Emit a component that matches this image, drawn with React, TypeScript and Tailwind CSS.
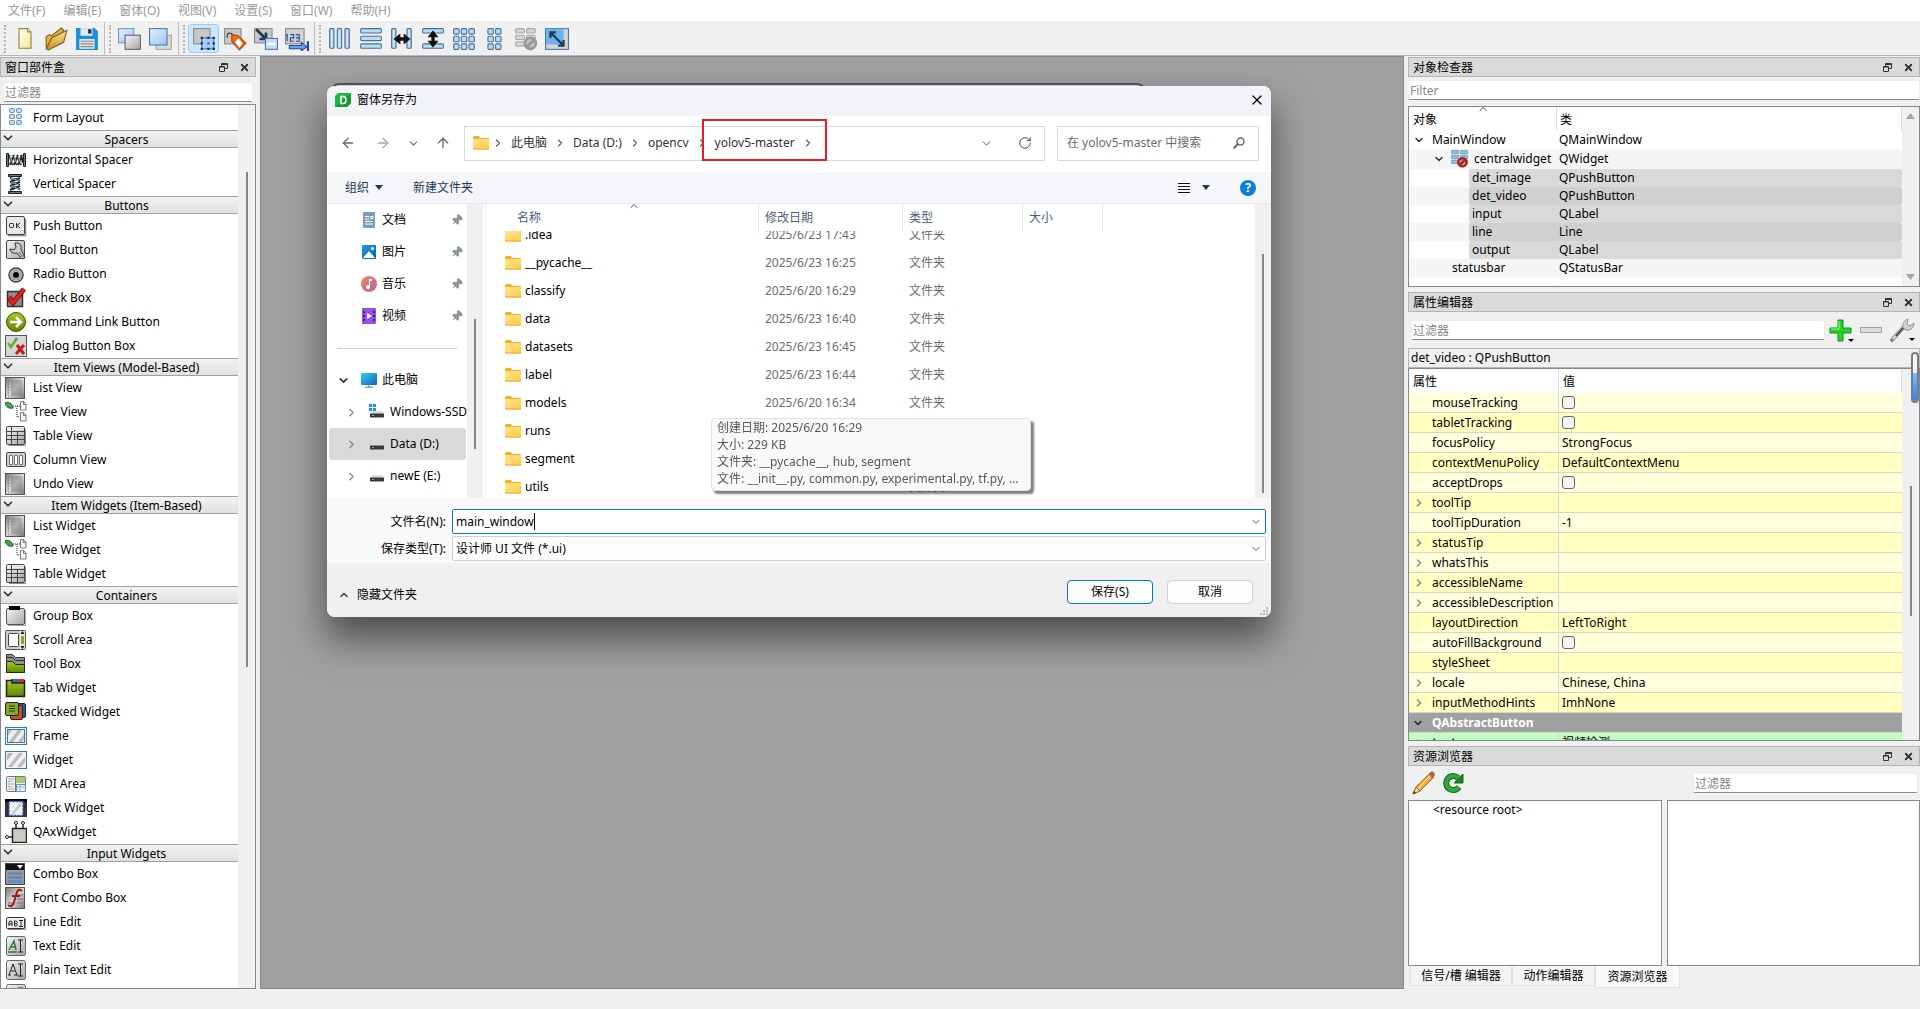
import React, {useEffect, useRef} from 'react';
import {
  ArrowLeft,
  ArrowRight,
  ArrowUp,
  ChevronDown,
  ChevronRight,
  ChevronUp,
  Pin,
  RotateCw,
  Search,
  X,
} from 'lucide-react';

const menus = ['文件(F)', '编辑(E)', '窗体(O)', '视图(V)', '设置(S)', '窗口(W)', '帮助(H)'];

// shared gradients, referenced by id from the icons below
function IconDefs() {
  return (
    <svg className="absolute h-0 w-0" aria-hidden="true">
      <defs>
        <linearGradient id="grey" x1="0" y1="0" x2="1" y2="1">
          <stop offset="0" stopColor="#f4f4f4" />
          <stop offset="1" stopColor="#a8a8a8" />
        </linearGradient>
        <linearGradient id="dark" x1="0" y1="0" x2="1" y2="1">
          <stop offset="0" stopColor="#777" />
          <stop offset="0.5" stopColor="#d8d8d8" />
          <stop offset="1" stopColor="#777" />
        </linearGradient>
        <linearGradient id="blue" x1="0" y1="0" x2="1" y2="1">
          <stop offset="0" stopColor="#e4f0ff" />
          <stop offset="1" stopColor="#9cc4f4" />
        </linearGradient>
        <linearGradient id="bar" x1="0" y1="0" x2="1" y2="0">
          <stop offset="0" stopColor="#8cc0e8" />
          <stop offset="0.5" stopColor="#d4eefc" />
          <stop offset="1" stopColor="#8cc0e8" />
        </linearGradient>
        <linearGradient id="folder" x1="0" y1="0" x2="1" y2="1">
          <stop offset="0" stopColor="#ffe69b" />
          <stop offset="1" stopColor="#ffc93d" />
        </linearGradient>
        <linearGradient id="paper" x1="0" y1="0" x2="1" y2="1">
          <stop offset="0" stopColor="#fff" />
          <stop offset="1" stopColor="#f4e88a" />
        </linearGradient>
        <linearGradient id="gold" x1="0" y1="0" x2="0" y2="1">
          <stop offset="0" stopColor="#fbe596" />
          <stop offset="1" stopColor="#c88f1c" />
        </linearGradient>
        <linearGradient id="green" x1="0" y1="0" x2="0" y2="1">
          <stop offset="0" stopColor="#a4cc1c" />
          <stop offset="1" stopColor="#5e8408" />
        </linearGradient>
        <linearGradient id="screen" x1="0" y1="0" x2="1" y2="1">
          <stop offset="0" stopColor="#35d0e8" />
          <stop offset="1" stopColor="#0b64b8" />
        </linearGradient>
        <linearGradient id="music" x1="0" y1="0" x2="1" y2="1">
          <stop offset="0" stopColor="#f08a50" />
          <stop offset="1" stopColor="#b463b4" />
        </linearGradient>
        <linearGradient id="picture" x1="0" y1="0" x2="1" y2="1">
          <stop offset="0" stopColor="#1b9de8" />
          <stop offset="1" stopColor="#0661b8" />
        </linearGradient>
      </defs>
    </svg>
  );
}

function Svg({size = 22, children}: {size?: number; children: React.ReactNode}) {
  return (
    <svg width={size} height={size} viewBox="0 0 22 22" fill="none" className="shrink-0" aria-hidden="true">
      {children}
    </svg>
  );
}

function Grid({cols, rows, x, y, w, h, gap, fill, stroke}: {
  cols: number; rows: number; x: number; y: number; w: number; h: number; gap: number; fill: string; stroke: string;
}) {
  return (
    <>
      {Array.from({length: cols * rows}, (_, i) => (
        <rect
          key={i}
          x={x + (i % cols) * (w + gap)}
          y={y + Math.floor(i / cols) * (h + gap)}
          width={w}
          height={h}
          rx="1"
          fill={fill}
          stroke={stroke}
        />
      ))}
    </>
  );
}

const listIcon = (
  <Svg>
    <rect x="0.5" y="0.5" width="19" height="21" fill="url(#dark)" stroke="#555" />
    <path d="M3 4h1M3 7h1M3 10h1M3 13h1M3 16h1M3 19h1" stroke="#666" />
    <path d="M6 4h11M6 6h11M6 8h11M6 10h11M6 12h11M6 14h11M6 16h11M6 18h11" stroke="#808080" />
  </Svg>
);

const treeIcon = (
  <Svg>
    <path d="M8 5h7M12 5v11h3" stroke="#222" strokeDasharray="1 1" />
    <path d="M0 2c3-2 7 0 8 5-4 1-7-1-8-5z" fill="#3ea84a" stroke="#145c1e" />
    <path d="M15.5 .5h3l2.5 2.5v6h-5.5zM15.5 11.5h3l2.5 2.5v6h-5.5z" fill="#fafafa" stroke="#777" />
    <path d="M18.5 .5v3h2.5M18.5 11.5v3h2.5" stroke="#777" />
  </Svg>
);

const tableIcon = (
  <Svg>
    <rect x="1.5" y="1.5" width="18" height="18" rx="1.5" fill="url(#grey)" stroke="#444" />
    <path d="M2 2.5h17M2 4.5h17" stroke="#eee" />
    <path d="M2 6.5h17M2 10.5h17M2 14.5h17M6.5 2v17M12.5 6v13" stroke="#444" />
    <path d="M20.5 4v16.5H4" stroke="#888" />
  </Svg>
);

const textEditBox = (
  <>
    <rect x="1.5" y="1.5" width="19" height="19" rx="2" fill="url(#grey)" stroke="#666" />
    <path d="M13 5h5M13 17h5M15.5 5v12" stroke="#222" />
  </>
);

const icons: Record<string, React.ReactNode> = {
  form: (
    <Svg>
      <Grid cols={2} rows={3} x={4.5} y={1.5} w={5} h={4} gap={2} fill="url(#bar)" stroke="#6f8fae" />
    </Svg>
  ),
  hspacer: (
    <Svg>
      <path d="M4 6l4 10M8 6l4 10M12 6l4 10M16 6l2 8M5 16l4-10M9 16l4-10M13 16l4-10" stroke="#1d2a33" strokeWidth="2" />
      <path d="M5 7l3 8M9 7l3 8M13 7l3 8" stroke="#9cc0d4" />
      <path d="M1.5 4.5h2v13h-2zM18.5 4.5h2v13h-2z" fill="#777" stroke="#222" />
    </Svg>
  ),
  vspacer: (
    <Svg>
      <path d="M5 5l10 3M5 9l10 3M5 13l10 3M15 5L5 9M15 9L5 13M15 13L5 17" stroke="#1d2a33" strokeWidth="2" />
      <path d="M6 5l8 3M6 9l8 3M6 13l8 3" stroke="#9cc0d4" />
      <path d="M3.5 1.5h13v2h-13zM3.5 18.5h13v2h-13z" fill="#777" stroke="#222" />
    </Svg>
  ),
  push: (
    <Svg>
      <path d="M3 20.5h17.5V4" stroke="#888" strokeWidth="1.5" />
      <rect x="1.5" y="1.5" width="18" height="18" rx="1.5" fill="#e8e8e8" stroke="#444" />
      <rect x="4.5" y="8.500" width="4" height="4" rx="1" stroke="#222" />
      <path d="M11.5 8v5M15 8l-3 2.5 3 2.5" stroke="#222" />
    </Svg>
  ),
  tool: (
    <Svg>
      <rect x="1.5" y="1.5" width="18" height="18" rx="1.5" fill="url(#grey)" stroke="#444" />
      <path d="M10 4c4-1 7 2 6 6l4 9-3 1-5-6c-4 1-7-1-7-4l4 1 2-3z" fill="#ccc" stroke="#333" />
      <path d="M14 13l4 5" stroke="#555" />
    </Svg>
  ),
  radio: (
    <Svg>
      <circle cx="11" cy="12" r="7" fill="#d8d8d8" stroke="#444" strokeWidth="1.5" />
      <circle cx="11" cy="12" r="5" fill="#bbb" stroke="#888" />
      <circle cx="11" cy="12" r="3" fill="#000" />
    </Svg>
  ),
  check: (
    <Svg>
      <rect x="2.5" y="4.5" width="15" height="15" fill="#8c8c8c" stroke="#333" strokeWidth="1.5" />
      <path d="M4 10l4 6L19 2" stroke="#6c1010" strokeWidth="5" />
      <path d="M4 10l4 6L19 2" stroke="#dc2020" strokeWidth="3.5" />
    </Svg>
  ),
  link: (
    <Svg>
      <circle cx="11" cy="11" r="9.5" fill="url(#green)" stroke="#40500c" />
      <path d="M5 11h10M11 6l5 5-5 5" stroke="#fff" strokeWidth="2.5" />
    </Svg>
  ),
  dialog: (
    <Svg>
      <rect x="0.5" y="0.5" width="21" height="21" fill="#d6d6d6" stroke="#555" />
      <path d="M3 8l3 4 6-9" stroke="#58b030" strokeWidth="2.5" />
      <path d="M12 10l7 9M19 10l-8 9" stroke="#c41c1c" strokeWidth="3" />
    </Svg>
  ),
  list: listIcon,
  tree: treeIcon,
  table: tableIcon,
  column: (
    <Svg>
      <rect x="1.5" y="3.5" width="19" height="14" rx="1.5" fill="#ccc" stroke="#444" />
      <path d="M4.5 6.5h3v9h-3zM9.5 6.5h3v9h-3zM14.5 6.5h3v9h-3z" fill="#fafafa" stroke="#777" />
    </Svg>
  ),
  group: (
    <Svg>
      <rect x="1.5" y="3.5" width="18" height="16" rx="1.5" fill="url(#grey)" stroke="#555" />
      <path d="M20.5 5v15.5H3" stroke="#aaa" />
      <path d="M4 1h11v4H4z" fill="#000" />
    </Svg>
  ),
  scroll: (
    <Svg>
      <rect x="0.5" y="1.5" width="20" height="19" rx="1" fill="#ccc" stroke="#555" />
      <rect x="3.5" y="4.5" width="10" height="13" rx="1" fill="#fff" stroke="#444" />
      <rect x="15" y="2" width="5" height="18" fill="#e8e8e8" />
      <rect x="16" y="7" width="3" height="8" fill="#84ac14" />
      <path d="M15.5 5l2-3 2 3zM15.5 17l2 3 2-3z" fill="#111" />
    </Svg>
  ),
  toolbox: (
    <Svg>
      <path d="M1.5 1.5h6l3 3h9v15h-18z" fill="#909090" stroke="#333" />
      <path d="M1.5 4.5h6l3 3h9" stroke="#333" />
      <path d="M1.5 8.5h6l3 3h9v8h-18z" fill="url(#green)" stroke="#222" />
    </Svg>
  ),
  tab: (
    <Svg>
      <path d="M1.5 3.5h18v16h-18z" fill="url(#green)" stroke="#222" strokeWidth="1.5" />
      <path d="M7 2h6v4H7z" fill="#2070c8" />
      <path d="M13 2h6v4h-6z" fill="#d03028" />
      <path d="M7 2v4h13" stroke="#222" strokeWidth="1.5" />
    </Svg>
  ),
  stacked: (
    <Svg>
      <rect x="9.5" y="2.5" width="11" height="14" rx="1.5" fill="#1c5cb4" stroke="#222" />
      <rect x="5.5" y="4.5" width="12" height="14" rx="1.5" fill="#c8501c" stroke="#222" />
      <rect x="0.5" y="1.5" width="13" height="13" rx="1.5" fill="#86aa14" stroke="#222" />
      <path d="M4 5h6M4 7.5h6M4 10h6" stroke="#234" />
    </Svg>
  ),
  frame: (
    <Svg>
      <rect x="0.5" y="2.5" width="21" height="17" fill="#fff" stroke="#3078c4" />
      <rect x="2.5" y="4.5" width="17" height="13" fill="#eee" stroke="#3078c4" />
      <path d="M4 17l9-12h4L8 17zM13 17l6-8v5l-2 3zM3 11l4-6H3z" fill="#b9b9b9" />
    </Svg>
  ),
  widget: (
    <Svg>
      <rect x="0.5" y="2.5" width="21" height="17" fill="#f0f0f0" stroke="#3078c4" />
      <path d="M3 18L14 4h4L7 18zM12 18l8-10v5l-4 5zM2 12l6-8H3l-1 2z" fill="#b9b9b9" />
    </Svg>
  ),
  mdi: (
    <Svg>
      <rect x="1.5" y="3.5" width="19" height="15" rx="1" fill="#eee" stroke="#777" />
      <path d="M11 4h9v6h-9z" fill="#a4cc70" />
      <path d="M11.5 11.5h9v7h-9z" fill="#e8f0fc" stroke="#6490d0" />
      <path d="M3 6h6M3 8.5h4M3 11h6M3 13.5h4M3 16h6M12 14h8M15 12v6" stroke="#a0b0c0" />
      <path d="M10.5 4v14" stroke="#777" />
    </Svg>
  ),
  dock: (
    <Svg>
      <rect y="2" width="22" height="18" fill="#333" />
      <path d="M0 2h22v3H0z" fill="#000" />
      <rect x="4" y="4.500" width="14" height="14" fill="#f0f0f0" stroke="#2c64b8" strokeWidth="1.5" strokeDasharray="2 1.5" />
      <path d="M6 17l9-11h3L9 17z" fill="#c8c8c8" />
    </Svg>
  ),
  qax: (
    <Svg>
      <rect x="7.5" y="7.5" width="14" height="14" fill="#d0cbc4" stroke="#222" strokeWidth="1.5" />
      <path d="M4 16h3M11 4v4M18 4v4" stroke="#222" strokeWidth="1.5" />
      <circle cx="2" cy="16" r="1.5" stroke="#222" />
      <circle cx="11" cy="2" r="1.5" stroke="#222" />
      <circle cx="18" cy="2" r="1.5" stroke="#222" />
    </Svg>
  ),
  combo: (
    <Svg>
      <rect x="0.5" y="0.5" width="19" height="21" fill="#999" stroke="#444" />
      <path d="M1 1h18v6H1z" fill="#111" />
      <path d="M12 2h6l-3 4z" fill="#fff" />
      <path d="M3 10.5h14M3 14.5h14M3 18.5h14" stroke="#5088d0" strokeWidth="2" />
    </Svg>
  ),
  font: (
    <Svg>
      <rect x="0.5" y="0.5" width="19" height="21" fill="url(#dark)" stroke="#555" />
      <path d="M12 8h6M12 12h6M3 16h5M12 16h6" stroke="#888" strokeWidth="1.5" />
      <path d="M17 4c-3-3-5 0-6 4L9 15c-1 4-3 5-6 3M7 9h8" stroke="#a01818" strokeWidth="2" />
    </Svg>
  ),
  line: (
    <Svg>
      <rect x="1.5" y="6.5" width="18" height="11" rx="1" fill="#eee" stroke="#333" />
      <path d="M20.5 8v10.5H3" stroke="#888" />
      <path d="M4 15v-4l1-1h1l1 1v4M4 13h3M9.5 10v5h2l1-1-1-1.5 1-1-1-1.5zM9.5 12.5h2M14 9.5h4M16 9.5v6M14 15.5h4" stroke="#222" />
    </Svg>
  ),
  text: (
    <Svg>
      {textEditBox}
      <path d="M4 15l5-9 2 9M6 12h5M3 17h9" stroke="#2c7a34" strokeWidth="1.5" />
    </Svg>
  ),
  plain: (
    <Svg>
      {textEditBox}
      <path d="M3 16h3M9 16h4M4 16l4-11 4 11M6 12h4" stroke="#222" />
    </Svg>
  ),
};

const widgetGroups: {title?: string; items: [string, string][]}[] = [
  {items: [['form', 'Form Layout']]},
  {title: 'Spacers', items: [['hspacer', 'Horizontal Spacer'], ['vspacer', 'Vertical Spacer']]},
  {
    title: 'Buttons',
    items: [
      ['push', 'Push Button'],
      ['tool', 'Tool Button'],
      ['radio', 'Radio Button'],
      ['check', 'Check Box'],
      ['link', 'Command Link Button'],
      ['dialog', 'Dialog Button Box'],
    ],
  },
  {
    title: 'Item Views (Model-Based)',
    items: [
      ['list', 'List View'],
      ['tree', 'Tree View'],
      ['table', 'Table View'],
      ['column', 'Column View'],
      ['list', 'Undo View'],
    ],
  },
  {
    title: 'Item Widgets (Item-Based)',
    items: [['list', 'List Widget'], ['tree', 'Tree Widget'], ['table', 'Table Widget']],
  },
  {
    title: 'Containers',
    items: [
      ['group', 'Group Box'],
      ['scroll', 'Scroll Area'],
      ['toolbox', 'Tool Box'],
      ['tab', 'Tab Widget'],
      ['stacked', 'Stacked Widget'],
      ['frame', 'Frame'],
      ['widget', 'Widget'],
      ['mdi', 'MDI Area'],
      ['dock', 'Dock Widget'],
      ['qax', 'QAxWidget'],
    ],
  },
  {
    title: 'Input Widgets',
    items: [
      ['combo', 'Combo Box'],
      ['font', 'Font Combo Box'],
      ['line', 'Line Edit'],
      ['text', 'Text Edit'],
      ['plain', 'Plain Text Edit'],
      ['plain', ''],
    ],
  },
];

const toolGroups: {label: string; icon: React.ReactNode; active?: boolean}[][] = [
  [
    {
      label: '新建',
      icon: (
        <Svg size={24}>
          <path d="M5.5 1.5h8l3 3v15h-11z" fill="url(#paper)" stroke="#8c8438" />
          <path d="M13.5 1.5v3h3" fill="#fff" stroke="#8c8438" />
        </Svg>
      ),
    },
    {
      label: '打开',
      icon: (
        <Svg size={24}>
          <path d="M2 19V9l3-2 2 1 9-7 2 2v5" fill="#e0b040" stroke="#7c5c14" />
          <path d="M5 15L17 4l1 3-9 10z" fill="#f4f4f4" stroke="#999" />
          <path d="M2 20l5-10 14-7-3 11L4 21z" fill="url(#gold)" stroke="#7c5c14" />
        </Svg>
      ),
    },
    {
      label: '保存',
      icon: (
        <Svg size={24}>
          <path d="M1 1h17l3 3v17H1z" fill="#1890e0" />
          <path d="M5 1h11v7H5z" fill="#e4e8ec" />
          <path d="M12 2h3v4h-3z" fill="#333" />
          <path d="M4 11h14v9H4z" fill="#e4e4e4" />
          <path d="M5 13h12M5 15.5h12M5 18h12" stroke="#888" />
        </Svg>
      ),
    },
  ],
  [
    {
      label: '放到后面',
      icon: (
        <Svg size={24}>
          <rect x="0.5" y="1.5" width="14" height="13" fill="url(#blue)" stroke="#7c94b8" />
          <rect x="6.5" y="7.5" width="14" height="13" fill="url(#grey)" stroke="#666" />
        </Svg>
      ),
    },
    {
      label: '放到前面',
      icon: (
        <Svg size={24}>
          <rect x="6.5" y="7.5" width="14" height="13" fill="#d8d8d8" stroke="#aaa" />
          <rect x="0.5" y="1.5" width="16" height="15" fill="url(#blue)" stroke="#4c78b4" />
        </Svg>
      ),
    },
  ],
  [
    {
      label: '编辑窗口部件',
      active: true,
      icon: (
        <Svg size={24}>
          <rect x="1.5" y="1.5" width="15" height="14" fill="#c8c8c8" stroke="#888" />
          <rect x="9" y="10" width="11" height="10" fill="#a8ccf8" stroke="#3870c4" />
          <path d="M8 9h2v2H8zM14 9h2v2h-2zM19 9h2v2h-2zM8 14h2v2H8zM19 14h2v2h-2zM8 19h2v2H8zM14 19h2v2h-2zM19 19h2v2h-2z" fill="#1c2c50" />
          <path d="M14 14h2v2h-2z" fill="#2c60b0" />
        </Svg>
      ),
    },
    {
      label: '编辑信号/槽',
      icon: (
        <Svg size={24}>
          <rect x="1.5" y="1.5" width="15" height="14" fill="#c8c8c8" stroke="#888" />
          <path d="M4 10c-1-5 3-6 6-2" stroke="#333" />
          <path d="M8 7l6 1 7 7-6 6-7-8z" fill="#f06820" stroke="#b84408" />
          <path d="M14 10l4 5-3 4-4-5z" fill="#fff" />
        </Svg>
      ),
    },
    {
      label: '编辑伙伴',
      icon: (
        <Svg size={24}>
          <rect x="0.5" y="1.5" width="16" height="13" fill="#c8c8c8" stroke="#888" />
          <path d="M2 2l9 9M11 5v6H5" stroke="#1c3c54" strokeWidth="2.5" />
          <rect x="10.5" y="10.5" width="11" height="10" fill="#c4dcf8" stroke="#4878b8" />
          <path d="M12 15.5h8" stroke="#fff" strokeWidth="2" />
        </Svg>
      ),
    },
    {
      label: '编辑Tab顺序',
      icon: (
        <Svg size={24}>
          <rect x="0.5" y="1.5" width="17" height="14" fill="#d0d0d0" stroke="#888" />
          <path d="M1 8l1-1v6M5 7h3v3H5v3h3M10 7h3v6h-3M10 10h3" stroke="#1c4c94" />
          <path d="M4 17h11v-3l5 4-5 4v-2H4z" fill="#6ca4e8" stroke="#1c4c94" />
          <path d="M21 13v9" stroke="#1c4c94" strokeWidth="2" />
        </Svg>
      ),
    },
  ],
  [
    {
      label: '水平布局',
      icon: (
        <Svg size={24}>
          <Grid cols={3} rows={1} x={1.5} y={1.5} w={4} h={18} gap={3} fill="url(#bar)" stroke="#4c6f94" />
        </Svg>
      ),
    },
    {
      label: '垂直布局',
      icon: (
        <Svg size={24}>
          <Grid cols={1} rows={3} x={1.5} y={1.5} w={19} h={4} gap={3} fill="#b4dcf4" stroke="#4c6f94" />
        </Svg>
      ),
    },
    {
      label: '使用分裂器水平布局',
      icon: (
        <Svg size={24}>
          <Grid cols={2} rows={1} x={1.5} y={1.5} w={4} h={18} gap={10} fill="url(#bar)" stroke="#4c6f94" />
          <path d="M4 11l5-4v3h4V7l5 4-5 4v-3H9v3z" fill="#111" stroke="#111" />
        </Svg>
      ),
    },
    {
      label: '使用分裂器垂直布局',
      icon: (
        <Svg size={24}>
          <Grid cols={1} rows={2} x={1.5} y={1.5} w={19} h={4} gap={10} fill="#b4dcf4" stroke="#4c6f94" />
          <path d="M11 4l4 5h-3v4h3l-4 5-4-5h3V9H7z" fill="#111" stroke="#111" />
        </Svg>
      ),
    },
    {
      label: '栅格布局',
      icon: (
        <Svg size={24}>
          <Grid cols={3} rows={3} x={1.5} y={1.5} w={5} h={5} gap={2} fill="#b4dcf4" stroke="#4c6f94" />
        </Svg>
      ),
    },
    {
      label: '在窗体布局中布局',
      icon: (
        <Svg size={24}>
          <Grid cols={2} rows={3} x={4.5} y={1.5} w={5} h={5} gap={2} fill="#b4dcf4" stroke="#4c6f94" />
        </Svg>
      ),
    },
    {
      label: '打破布局',
      icon: (
        <Svg size={24}>
          <Grid cols={2} rows={3} x={1.5} y={1.5} w={8} h={4} gap={2} fill="#d4d4d4" stroke="#aaa" />
          <circle cx="15" cy="15" r="5" fill="#c4c4c4" stroke="#999" strokeWidth="2.5" />
          <path d="M11 19l8-8" stroke="#999" strokeWidth="2.5" />
        </Svg>
      ),
    },
    {
      label: '调整大小',
      icon: (
        <Svg size={24}>
          <rect x="0.5" y="1.5" width="21" height="19" fill="#d4d4d4" stroke="#4c78b4" />
          <rect x="1" y="2" width="16" height="14" fill="#6cb0ec" />
          <path d="M5 5l12 12M5 10V5h5M17 12v5h-5" stroke="#143c54" strokeWidth="2" />
        </Svg>
      ),
    },
  ],
];

const inspectorRows: {name: string; cls: string; level: string; open?: boolean; icon?: boolean; selected?: boolean}[] = [
  {name: 'MainWindow', cls: 'QMainWindow', level: 'pl-1', open: true},
  {name: 'centralwidget', cls: 'QWidget', level: 'pl-6', open: true, icon: true},
  {name: 'det_image', cls: 'QPushButton', level: '', selected: true},
  {name: 'det_video', cls: 'QPushButton', level: '', selected: true},
  {name: 'input', cls: 'QLabel', level: '', selected: true},
  {name: 'line', cls: 'Line', level: '', selected: true},
  {name: 'output', cls: 'QLabel', level: '', selected: true},
  {name: 'statusbar', cls: 'QStatusBar', level: 'pl-[43px]'},
];

const properties: {name: string; value?: string; check?: boolean; expand?: boolean}[] = [
  {name: 'mouseTracking', check: true},
  {name: 'tabletTracking', check: true},
  {name: 'focusPolicy', value: 'StrongFocus'},
  {name: 'contextMenuPolicy', value: 'DefaultContextMenu'},
  {name: 'acceptDrops', check: true},
  {name: 'toolTip', expand: true},
  {name: 'toolTipDuration', value: '-1'},
  {name: 'statusTip', expand: true},
  {name: 'whatsThis', expand: true},
  {name: 'accessibleName', expand: true},
  {name: 'accessibleDescription', expand: true},
  {name: 'layoutDirection', value: 'LeftToRight'},
  {name: 'autoFillBackground', check: true},
  {name: 'styleSheet'},
  {name: 'locale', value: 'Chinese, China', expand: true},
  {name: 'inputMethodHints', value: 'ImhNone', expand: true},
];

const files = [
  ['.idea', '2025/6/23 17:43'],
  ['__pycache__', '2025/6/23 16:25'],
  ['classify', '2025/6/20 16:29'],
  ['data', '2025/6/23 16:40'],
  ['datasets', '2025/6/23 16:45'],
  ['label', '2025/6/23 16:44'],
  ['models', '2025/6/20 16:34'],
  ['runs', '2025/6/23 16:43'],
  ['segment', '2025/6/20 16:29'],
  ['utils', '2025/6/20 16:29'],
];

function FolderIcon() {
  return (
    <svg width="16" height="14" viewBox="0 0 16 14" className="shrink-0" aria-hidden="true">
      <path d="M0 2q0-2 1.5-2h4L8 2h7q1 0 1 1v3H0z" fill="#f4b01c" />
      <rect y="3" width="16" height="10.5" rx="1" fill="url(#folder)" />
      <path d="M0 13h16" stroke="#e8a820" />
    </svg>
  );
}

function DriveIcon({system = false}: {system?: boolean}) {
  return (
    <svg width="16" height="16" viewBox="0 0 16 16" className="shrink-0" aria-hidden="true">
      <path d="M3 7h10l2 3H1z" fill="#d8dce0" />
      <rect x="1" y="9.5" width="14" height="4" rx="0.5" fill="#3a3a3a" />
      <rect x="3" y="11" width="2" height="1" fill="#38e058" />
      {system && <path d="M0 0h3v3H0zM4 0h3v3H4zM0 4h3v3H0zM4 4h3v3H4z" fill="#1490e4" />}
    </svg>
  );
}

function DockTitle({title}: {title: string}) {
  return (
    <div className="flex h-5 shrink-0 items-center border border-[#b4b4b4] bg-[#dadada] pl-1 pr-[5px]">
      <h2 className="flex-1 pt-0.5">{title}</h2>
      <button aria-label={`浮动 ${title}`} className="flex h-4 w-[21px] items-center justify-center">
        <svg width="9" height="9" viewBox="0 0 9 9" fill="none" stroke="#333">
          <path d="M2.5 3V.5h6v5H6" />
          <path d="M3 1h5" strokeWidth="2" />
          <path d="M.5 3.5h5v5h-5zM.5 4h5" />
        </svg>
      </button>
      <button aria-label={`关闭 ${title}`} className="ml-1 flex h-4 w-3 items-center justify-center">
        <X size={11} strokeWidth={4} color="#333" />
      </button>
    </div>
  );
}

function FilterInput({label, placeholder = '过滤器', className = ''}: {label: string; placeholder?: string; className?: string}) {
  return (
    <input
      type="text"
      aria-label={label}
      placeholder={placeholder}
      className={`h-5 min-w-0 rounded-xs border border-b-[#8a8a8a] border-[#ececec] bg-white px-px text-xs placeholder:text-[#868686] ${className}`}
    />
  );
}

function ToolBar() {
  return (
    <div className="flex h-[34px] shrink-0 border-b border-[#b8b8b8] bg-[#f0f0f0]">
      {toolGroups.map((group, i) => (
        <div key={i} className="flex items-center border-r border-[#c0c0c0] pl-1 pr-0.5 last:border-r-0">
          <span className="mr-[3px] h-7 border-l-2 border-dotted border-[#b4b4b4]" />
          {group.map((tool) => (
            <button
              key={tool.label}
              aria-label={tool.label}
              className={`flex h-[29px] w-[31px] items-center justify-center rounded-sm ${
                tool.active ? 'border border-[#98ccf4] bg-[#cce6fc]' : ''
              }`}
            >
              {tool.icon}
            </button>
          ))}
        </div>
      ))}
    </div>
  );
}

function WidgetBox() {
  return (
    <aside className="flex w-64 shrink-0 flex-col pt-px">
      <DockTitle title="窗口部件盒" />
      <FilterInput label="过滤窗口部件" className="mx-[3px] mb-0.5 mt-[5px]" />
      <div className="flex min-h-0 flex-1 border border-[#828790] bg-white">
        <div className="min-w-0 flex-1 overflow-hidden">
          <div className="h-px" />
          {widgetGroups.map((group, i) => (
            <section key={i}>
              {group.title && (
                <h3 className="flex h-[18px] items-center border-y border-[#a0a0a0] bg-linear-to-b from-[#f2f2f2] to-[#e0e0e0]">
                  <ChevronDown size={14} strokeWidth={3} className="shrink-0 self-start text-[#333]" />
                  <span className="flex-1 pt-0.5 text-center">{group.title}</span>
                </h3>
              )}
              <ul>
                {group.items.map(([icon, name], j) => (
                  <li key={j} className="flex h-6 items-center gap-1.5 pl-1">
                    {icons[icon]}
                    <span>{name}</span>
                  </li>
                ))}
              </ul>
            </section>
          ))}
        </div>
        <div className="w-[17px] bg-[#f0f0f0] pl-2 pt-[67px]">
          <div className="h-[495px] w-0.5 bg-[#858585]" />
        </div>
      </div>
    </aside>
  );
}

function ObjectInspector() {
  return (
    <section className="flex shrink-0 flex-col">
      <DockTitle title="对象检查器" />
      <FilterInput label="过滤对象" placeholder="Filter" className="mb-1.5 mt-[3px] w-full" />
      <div className="flex h-[181px] border border-[#828790] bg-white">
        <div className="relative min-w-0 flex-1">
          <table className="w-full table-fixed border-separate border-spacing-0">
            <thead>
              <tr className="h-6 text-left">
                <th className="w-[148px] border-r border-[#dcdcdc] pl-1 pt-0.5 font-normal">对象</th>
                <th className="border-r border-[#dcdcdc] pl-[3px] pt-0.5 font-normal">类</th>
              </tr>
            </thead>
            <tbody>
              {inspectorRows.map((row) => (
                <tr
                  key={row.name}
                  className={`even:bg-[#f5f5f5] ${row.icon ? 'h-5' : 'h-[18px]'} ${row.selected ? 'group' : ''}`}
                >
                  <td className="p-0">
                    {row.selected ? (
                      <div className="ml-[60px] h-[18px] rounded-l-xs bg-[#d9d9d9] pl-[3px] leading-[18px] group-even:bg-[#d0d0d0]">
                        {row.name}
                      </div>
                    ) : (
                      <div className={`flex items-center whitespace-nowrap ${row.level}`}>
                        {row.open && <ChevronDown size={12} strokeWidth={3} className="shrink-0 text-[#333]" />}
                        {row.icon && (
                          <span className="ml-1.5">
                            <Svg size={18}>
                              <Grid cols={2} rows={3} x={0.5} y={0.5} w={9} h={4} gap={2} fill="#8cbce0" stroke="#6c94b4" />
                              <circle cx="14" cy="15" r="5" fill="#d8a0a0" stroke="#a82424" strokeWidth="3" />
                              <path d="M10 19l8-8" stroke="#a82424" strokeWidth="3" />
                            </Svg>
                          </span>
                        )}
                        <span className={row.icon ? 'ml-[5px]' : row.open ? 'ml-[7px]' : ''}>{row.name}</span>
                      </div>
                    )}
                  </td>
                  <td className={`p-0 pl-0.5 ${row.selected ? 'rounded-r-xs bg-[#d9d9d9] group-even:bg-[#d0d0d0]' : ''}`}>
                    {row.cls}
                  </td>
                </tr>
              ))}
            </tbody>
          </table>
          <ChevronUp size={12} strokeWidth={2} className="absolute left-[68px] top-[-4px] text-[#444]" />
        </div>
        <div className="flex w-[17px] flex-col items-center justify-between bg-[#f0f0f0] py-1.5">
          <svg width="9" height="6" viewBox="0 0 9 6"><path d="M4.5 0L9 6H0z" fill="#a4a4a4" /></svg>
          <svg width="9" height="6" viewBox="0 0 9 6"><path d="M0 0h9L4.5 6z" fill="#a4a4a4" /></svg>
        </div>
      </div>
    </section>
  );
}

function PropertyEditor() {
  return (
    <section className="relative mt-[5px] flex min-h-0 flex-1 flex-col">
      <DockTitle title="属性编辑器" />
      <div className="flex h-9 shrink-0 items-center pl-[3px]">
        <FilterInput label="过滤属性" className="flex-1" />
        <button aria-label="添加动态属性" className="ml-1 flex w-[30px] items-center">
          <svg width="26" height="24" viewBox="0 0 26 24">
            <path d="M9 2h5v8h8v5h-8v8H9v-8H1v-5h8z" fill="#24d424" stroke="#108c10" />
            <path d="M10 3v8H2" fill="none" stroke="#98f498" />
            <path d="M19 21h6l-3 3z" fill="#000" />
          </svg>
        </button>
        <button aria-label="删除动态属性" className="flex w-[31px] items-center">
          <svg width="24" height="8" viewBox="0 0 24 8">
            <rect x="1.5" y="1.5" width="21" height="5" fill="#dcdcdc" stroke="#a4a4a4" />
          </svg>
        </button>
        <button aria-label="配置属性编辑器" className="flex w-[30px] items-center">
          <svg width="26" height="24" viewBox="0 0 26 24">
            <path d="M2 22L14 9" stroke="#888" strokeWidth="4" strokeLinecap="round" />
            <path d="M3 21L14 9" stroke="#ddd" strokeWidth="2" />
            <path d="M13 10c-1-4 1-8 5-9l-1 5 3 2 4-3c0 4-3 8-8 7z" fill="#d0d0d0" stroke="#909090" />
            <path d="M6 18l7-8" stroke="#333" strokeWidth="1.5" />
            <path d="M19 20h6l-3 3z" fill="#000" />
          </svg>
        </button>
      </div>
      <p className="h-5 shrink-0 border border-[#b4b4b4] pl-0.5 leading-[18px]">det_video : QPushButton</p>
      <div className="flex min-h-0 flex-1 border border-[#828790] bg-white">
        <div className="min-w-0 flex-1 overflow-hidden">
          <table className="w-full table-fixed border-separate border-spacing-0">
            <thead>
              <tr className="h-6 text-left">
                <th className="w-[150px] border-r border-[#dcdcdc] pl-1 pt-0.5 font-normal">属性</th>
                <th className="border-r border-[#dcdcdc] pl-1 pt-0.5 font-normal">值</th>
              </tr>
            </thead>
            <tbody>
              {properties.map((p) => (
                <tr key={p.name} className="h-5 odd:bg-[#ffffdc] even:bg-[#ffffbf]">
                  <td className="border-b border-r border-[#d4d4d4] p-0">
                    <div className="flex items-center whitespace-nowrap">
                      <span className="flex w-[23px] shrink-0 pl-1">
                        {p.expand && <ChevronRight size={12} strokeWidth={3} color="#8a8a8a" />}
                      </span>
                      {p.name}
                    </div>
                  </td>
                  <td className="border-b border-[#d4d4d4] p-0 pl-[3px]">
                    {p.check ? (
                      <input
                        type="checkbox"
                        aria-label={p.name}
                        className="block h-[13px] w-[13px] appearance-none rounded-[3px] border border-[#666] bg-[#f4f4f4]"
                      />
                    ) : (
                      p.value
                    )}
                  </td>
                </tr>
              ))}
              <tr className="h-5 bg-[#a0a0a0] font-bold text-white">
                <td colSpan={2} className="border-b border-[#d4d4d4] p-0">
                  <div className="flex items-center">
                    <ChevronDown size={12} strokeWidth={3} className="ml-[3px] mr-2 text-[#222]" />
                    QAbstractButton
                  </div>
                </td>
              </tr>
              <tr className="h-5 bg-[#bfffbf]">
                <td className="border-r border-[#d4d4d4] p-0">
                  <div className="flex items-center font-bold">
                    <span className="flex w-[23px] pl-1"><ChevronRight size={12} strokeWidth={3} color="#8a8a8a" /></span>
                    text
                  </div>
                </td>
                <td className="p-0 pl-[3px]">视频检测</td>
              </tr>
            </tbody>
          </table>
        </div>
        <div className="w-[17px] bg-[#f0f0f0] pl-2 pt-[117px]">
          <div className="h-[130px] w-0.5 bg-[#858585]" />
        </div>
      </div>
      {/* floating scroll handle above the panel edge */}
      <div className="absolute right-px top-[60px] flex h-[51px] w-2 flex-col justify-end rounded border-2 border-[#7c7c7c] bg-[#f4f4f4]">
        <div className="h-7 rounded-b bg-linear-to-b from-[#6cc0fc] to-[#3080f8]" />
      </div>
    </section>
  );
}

function ResourceBrowser() {
  return (
    <section className="mt-[5px] shrink-0">
      <DockTitle title="资源浏览器" />
      <div className="flex h-[34px] items-center pl-1 pr-0.5">
        <button aria-label="编辑资源">
          <svg width="24" height="24" viewBox="0 0 24 24">
            <path d="M1 23l3-7L18 2l4 4L8 20z" fill="#f0a838" stroke="#a86c18" />
            <path d="M6 18L19 4" stroke="#fcd880" strokeWidth="1.5" />
            <path d="M17 3l2-2q2-1 3 1t0 3l-2 2z" fill="#b8604c" stroke="#886" />
            <path d="M1 23l3-7 4 4z" fill="#f4dcb0" stroke="#a86c18" />
            <path d="M1 23l1-3 2 2z" fill="#333" />
          </svg>
        </button>
        <button aria-label="重新加载" className="ml-[5px]">
          <svg width="24" height="24" viewBox="0 0 24 24">
            <path d="M17 7a7 7 0 1 0 1 9" fill="none" stroke="#146c1c" strokeWidth="6" />
            <path d="M22 3v9h-9z" fill="#1c8428" stroke="#146c1c" />
            <path d="M17 7a7 7 0 1 0 1 9" fill="none" stroke="#30a83c" strokeWidth="4" />
          </svg>
        </button>
        <FilterInput label="过滤资源" className="ml-auto w-[225px]" />
      </div>
      <div className="grid h-[166px] grid-cols-2 gap-[5px]">
        <div className="border border-[#828790] bg-white pl-6 pt-px">&lt;resource root&gt;</div>
        <div className="border border-[#828790] bg-white" />
      </div>
      <div role="tablist" className="flex h-[23px] items-start pl-0.5">
        <button role="tab" aria-selected="false" className="h-5 w-[102px] border border-t-0 border-[#e2e2e2] bg-[#f3f3f3]">信号/槽 编辑器</button>
        <button role="tab" aria-selected="false" className="h-5 w-[83px] border border-t-0 border-[#e2e2e2] bg-[#f3f3f3]">动作编辑器</button>
        <button role="tab" aria-selected="true" className="h-[22px] w-[85px] border border-t-0 border-[#e2e2e2] bg-[#f9f9f9]">资源浏览器</button>
      </div>
    </section>
  );
}

function Crumb({children}: {children: React.ReactNode}) {
  return (
    <>
      <ChevronRight size={12} strokeWidth={2.5} className="mr-[7px] shrink-0 text-[#666]" />
      <button className="mr-[7px]">{children}</button>
    </>
  );
}

const quickAccess = [
  {
    name: '文档',
    icon: (
      <svg width="16" height="16" viewBox="0 0 16 16">
        <rect x="2" width="12" height="16" rx="1" fill="#7c9cbc" />
        <path d="M4 4.5h4M4 7h4M4 9.5h8M4 12h8M9.5 4.5H12v2H9.5z" stroke="#fff" fill="none" />
      </svg>
    ),
  },
  {
    name: '图片',
    icon: (
      <svg width="16" height="16" viewBox="0 0 16 16">
        <rect x="1" y="1" width="14" height="14" rx="1" fill="url(#picture)" />
        <path d="M2 14l6-7 6 7z" fill="#fff" />
        <circle cx="11.5" cy="4.5" r="1.5" fill="#fff" />
      </svg>
    ),
  },
  {
    name: '音乐',
    icon: (
      <svg width="16" height="16" viewBox="0 0 16 16">
        <circle cx="8" cy="8" r="8" fill="url(#music)" />
        <path d="M8 3h3v2H9v6H8z" fill="#fff" />
        <circle cx="7" cy="11" r="2" fill="#fff" />
      </svg>
    ),
  },
  {
    name: '视频',
    icon: (
      <svg width="16" height="16" viewBox="0 0 16 16">
        <rect x="1" width="14" height="16" rx="1" fill="#9450e4" />
        <path d="M2 3h2v2H2zM2 7h2v2H2zM2 11h2v2H2zM12 3h2v2h-2zM12 7h2v2h-2zM12 11h2v2h-2z" fill="#4c1c94" />
        <path d="M6 5l5 3-5 3z" fill="#fff" />
      </svg>
    ),
  },
];

function SaveDialog() {
  const listRef = useRef<HTMLDivElement>(null);

  useEffect(() => {
    if (listRef.current) {
      listRef.current.scrollTop = 10;
    }
  }, []);

  return (
    <div
      role="dialog"
      aria-label="窗体另存为"
      className="absolute left-[66px] top-[29px] w-[944px] overflow-hidden rounded-lg bg-white shadow-[0_20px_36px_2px_rgba(0,0,0,0.5)]"
    >
      <div className="flex h-[30px] items-center bg-[#f1f3f8] pb-0.5 pl-2 pr-1.5">
        <svg width="16" height="16" viewBox="0 0 16 16" aria-hidden="true">
          <path d="M3 1h13v10l-4 4H0V4z" fill="#28b444" />
          <path d="M0 15l16-14v10l-4 4z" fill="#189834" />
          <path d="M6 4.5h2q3 0 3 3.5t-3 3.5H6z" fill="none" stroke="#fff" strokeWidth="1.5" />
        </svg>
        <h1 className="ml-1.5 flex-1">窗体另存为</h1>
        <button aria-label="关闭"><X size={16} strokeWidth={1.8} /></button>
      </div>

      <div className="flex h-14 items-center pb-0.5 pl-[13px] pr-3 text-[#6b6b6b]">
        <button aria-label="后退"><ArrowLeft size={16} strokeWidth={2} /></button>
        <button aria-label="前进" className="ml-[19px] text-[#aaa]"><ArrowRight size={16} strokeWidth={2} /></button>
        <button aria-label="最近位置" className="ml-4"><ChevronDown size={13} strokeWidth={2} /></button>
        <button aria-label="向上" className="ml-[15px]"><ArrowUp size={16} strokeWidth={2} /></button>
        <div className="relative ml-[13px] flex h-[35px] flex-1 items-center border border-[#d9d9d9] pl-2 text-[#333]">
          <FolderIcon />
          <span className="w-[3px]" />
          <Crumb>此电脑</Crumb>
          <Crumb>Data (D:)</Crumb>
          <Crumb>opencv</Crumb>
          <Crumb>yolov5-master</Crumb>
          <ChevronRight size={12} strokeWidth={2.5} className="text-[#666]" />
          <button aria-label="历史记录" className="ml-auto mr-[25px]"><ChevronDown size={13} strokeWidth={1.5} /></button>
          <button aria-label="刷新" className="mr-3"><RotateCw size={14} strokeWidth={1.5} /></button>
          <div className="absolute left-[237px] top-[-8px] h-[42px] w-[125px] border-2 border-[#ec1c24]" />
        </div>
        <div className="ml-3 flex h-[35px] w-[202px] items-center border border-[#d9d9d9] px-[9px]">
          <input
            type="text"
            aria-label="搜索"
            placeholder="在 yolov5-master 中搜索"
            className="min-w-0 flex-1 placeholder:text-[#6b6b6b]"
          />
          <svg width="12" height="12" viewBox="0 0 12 12" fill="none" stroke="#6b6b6b" strokeWidth="1.5" className="mr-1">
            <circle cx="7.5" cy="4.5" r="3.5" />
            <path d="M5 7l-4.500 4.500" strokeWidth="2" />
          </svg>
        </div>
      </div>

      <div className="flex h-8 items-center border-b border-[#e8e8e8] bg-[#f4f6f9] pl-[18px] pr-[15px] text-[#1e395b]">
        <button className="flex items-center">
          组织
          <svg width="8" height="5" viewBox="0 0 8 5" className="ml-1.5"><path d="M0 0h8L4 5z" fill="#1e395b" /></svg>
        </button>
        <button className="ml-[30px]">新建文件夹</button>
        <button aria-label="更改视图" className="ml-auto flex items-center">
          <svg width="12" height="10" viewBox="0 0 12 10" stroke="#111">
            <path d="M0 .5h12M0 3.5h12M0 6.5h12M0 9.5h12" />
          </svg>
          <svg width="8" height="5" viewBox="0 0 8 5" className="ml-3"><path d="M0 0h8L4 5z" fill="#1e395b" /></svg>
        </button>
        <button aria-label="帮助" className="ml-[30px] h-4 w-4 rounded-full bg-[#0c80d8] text-center text-xs font-bold leading-4 text-white">?</button>
      </div>

      <div className="flex h-[294px]">
        <nav className="w-[140px] overflow-hidden whitespace-nowrap pl-0.5">
          {quickAccess.map((item) => (
            <a key={item.name} href="#" className="flex h-8 items-center pl-8 pr-1">
              {item.icon}
              <span className="ml-[5px] flex-1">{item.name}</span>
              <Pin size={12} className="rotate-45 fill-[#8c979f] text-[#8c979f]" />
            </a>
          ))}
          <div className="flex h-8 items-center pl-2 pr-2.5"><hr className="flex-1 border-[#d0d0d0]" /></div>
          <a href="#" className="flex h-8 items-center pl-2">
            <ChevronDown size={13} strokeWidth={3} className="text-[#333]" />
            <svg width="16" height="16" viewBox="0 0 16 16" className="ml-[11px]">
              <rect y="1" width="16" height="12" rx="1" fill="url(#screen)" />
              <path d="M8 13v2M4 15.5h8" stroke="#8898a8" strokeWidth="1.5" />
            </svg>
            <span className="ml-[5px]">此电脑</span>
          </a>
          {['Windows-SSD', 'Data (D:)', 'newE (E:)'].map((drive) => (
            <a
              key={drive}
              href="#"
              className={`mr-px flex h-8 items-center rounded-sm pl-4 ${drive === 'Data (D:)' ? 'bg-[#d9d9d9]' : ''}`}
            >
              <ChevronRight size={13} strokeWidth={2.5} className="mr-[11px] shrink-0 text-[#8a8a8a]" />
              <DriveIcon system={drive === 'Windows-SSD'} />
              <span className="ml-[5px]">{drive}</span>
            </a>
          ))}
        </nav>
        <div className="w-4 shrink-0 bg-[#f0f0f0] pl-[7px] pt-[115px]">
          <div className="h-[130px] w-0.5 bg-[#858585]" />
        </div>
        <div className="ml-0.5 min-w-0 flex-1 overflow-hidden border-l border-[#f0f0f0]" ref={listRef}>
          <table className="w-full table-fixed border-separate border-spacing-0">
            <thead className="sticky top-0 z-10 bg-white text-left text-[#4c607a]">
              <tr className="h-[27px]">
                <th className="w-[273px] border-r border-[#e5e5e5] pl-[31px] font-normal">名称</th>
                <th className="w-36 border-r border-[#e5e5e5] pl-1.5 font-normal">修改日期</th>
                <th className="w-[120px] border-r border-[#e5e5e5] pl-1.5 font-normal">类型</th>
                <th className="w-20 border-r border-[#e5e5e5] pl-1.5 font-normal">大小</th>
                <th />
              </tr>
            </thead>
            <tbody>
              {files.map(([name, date]) => (
                <tr key={name} className="h-7 text-[#6d6d6d]">
                  <td className="p-0 pl-[19px] text-black">
                    <div className="flex items-center gap-1">
                      <FolderIcon />
                      {name}
                    </div>
                  </td>
                  <td className="p-0 pl-1.5">{date}</td>
                  <td className="p-0 pl-1.5">文件夹</td>
                  <td />
                  <td />
                </tr>
              ))}
            </tbody>
          </table>
        </div>
        <div className="w-4 shrink-0 bg-[#f0f0f0] pl-[7px] pt-[50px]">
          <div className="h-[239px] w-0.5 bg-[#858585]" />
        </div>
      </div>
      <ChevronUp size={12} strokeWidth={2} className="absolute left-[301px] top-[114px] z-20 text-[#444]" />

      <div className="absolute left-[384px] top-[332px] z-20 w-[320px] rounded border border-[#e0e0e0] bg-[#f9f9f9] px-[5px] pb-[3px] leading-[17px] text-[#575757] shadow-[3px_3px_2px_rgba(0,0,0,0.5)]">
        <p>创建日期: 2025/6/20 16:29</p>
        <p>大小: 229 KB</p>
        <p>文件夹: __pycache__, hub, segment</p>
        <p>文件: __init__.py, common.py, experimental.py, tf.py, ...</p>
      </div>

      <div className="grid grid-cols-[119px_1fr] items-center gap-x-1.5 gap-y-0.5 bg-[#f9f9f9] pb-0.5 pr-[5px] pt-[11px]">
        <label htmlFor="file-name" className="text-right">文件名(N):</label>
        <div className="flex h-[25px] items-center rounded-xs border border-[#0078d4] bg-white px-[3px]">
          <input id="file-name" type="text" defaultValue="main_window" className="field-sizing-content" />
          <span className="h-[17px] w-px bg-black" />
          <ChevronDown size={12} strokeWidth={2} className="ml-auto text-[#555]" />
        </div>
        <label htmlFor="file-type" className="text-right">保存类型(T):</label>
        <div className="flex h-[25px] items-center rounded-xs border border-[#d0d0d0] bg-[#fdfdfd] px-[3px]">
          <select id="file-type" className="flex-1 appearance-none">
            <option>设计师 UI 文件 (*.ui)</option>
          </select>
          <ChevronDown size={12} strokeWidth={2} className="ml-auto text-[#555]" />
        </div>
      </div>

      <div className="relative flex h-[54px] items-center bg-[#f0f0f0] pl-[11px] pr-[18px]">
        <button className="mt-2.5 flex items-center gap-[7px]">
          <ChevronUp size={12} strokeWidth={3} className="text-[#444]" />
          隐藏文件夹
        </button>
        <button className="ml-auto mt-1 h-6 w-[86px] rounded border border-[#0078d4] bg-[#fdfdfd]">保存(S)</button>
        <button className="ml-3.5 mt-1 h-6 w-[86px] rounded border border-[#d0d0d0] bg-[#fdfdfd]">取消</button>
        <svg width="8" height="8" viewBox="0 0 8 8" className="absolute bottom-0.5 right-[3px]" aria-hidden="true">
          <path d="M6 0h2v2H6zM3 3h2v2H3zM6 3h2v2H6zM0 6h2v2H0zM3 6h2v2H3zM6 6h2v2H6z" fill="#bbb" />
        </svg>
      </div>
    </div>
  );
}

export default function App() {
  return (
    <div className="flex h-screen flex-col overflow-hidden bg-[#f0f0f0] font-['Noto_Sans','Noto_Sans_CJK_SC',sans-serif] text-xs text-black">
      <IconDefs />
      <nav className="flex h-[22px] shrink-0 items-center gap-[18px] border-b border-[#f0f0f0] bg-white pl-2 text-[#999]">
        {menus.map((menu) => (
          <button key={menu}>{menu}</button>
        ))}
      </nav>
      <ToolBar />
      <div className="flex min-h-0 flex-1">
        <WidgetBox />
        <main className="relative ml-1 min-w-0 flex-1 overflow-hidden border border-[#828790] bg-[#a0a0a0]">
          <div className="absolute left-[70px] top-[26px] h-10 w-[814px] rounded-t-lg border-2 border-[#555] border-b-0 bg-[#d8dce4]" />
          <SaveDialog />
        </main>
        <aside className="ml-1 flex w-[512px] shrink-0 flex-col pt-px">
          <ObjectInspector />
          <PropertyEditor />
          <ResourceBrowser />
        </aside>
      </div>
      <footer className="h-5 shrink-0" />
    </div>
  );
}
